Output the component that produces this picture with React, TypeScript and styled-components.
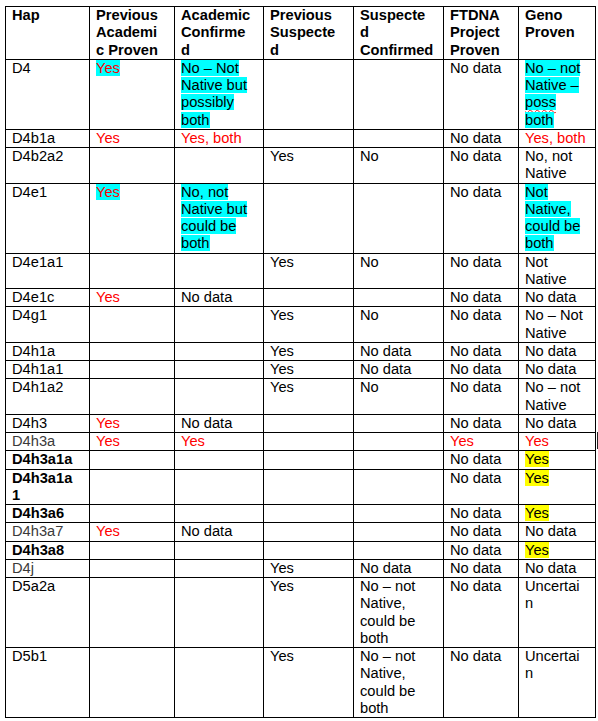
import React from "react";
import styled, { createGlobalStyle } from "styled-components";

type Mark = "cyan" | "yellow";

type CellData =
  | string
  | {
      t: React.ReactNode;
      red?: boolean;
      hl?: Mark;
      bold?: boolean;
      dim?: boolean;
    };

const GlobalStyle = createGlobalStyle`
  html, body {
    margin: 0;
    padding: 0;
    background: #ffffff;
  }
  body {
    font-family: "Liberation Sans", Arial, sans-serif;
    color: #000000;
  }
`;

const Page = styled.div`
  position: relative;
  padding: 6px 0 0 5px;
`;

const Table = styled.table`
  width: 591px;
  table-layout: fixed;
  border-collapse: collapse;
  font-size: 11pt;
  line-height: 17.25px;
`;

const Th = styled.th`
  border: 1px solid #000;
  padding: 0 6px;
  text-align: left;
  vertical-align: top;
  font-weight: bold;
  white-space: nowrap;
`;

const Td = styled.td<{ $red?: boolean; $bold?: boolean; $dim?: boolean }>`
  border: 1px solid #000;
  padding: 0 6px;
  vertical-align: top;
  white-space: nowrap;
  font-weight: ${(p) => (p.$bold ? "bold" : "normal")};
  color: ${(p) => (p.$red ? "#ff0000" : p.$dim ? "#3a3a3a" : "#000000")};
`;

const Highlight = styled.span<{ $mark: Mark }>`
  background: ${(p) => (p.$mark === "cyan" ? "#00ffff" : "#ffff00")};
`;

const Spell = styled.span`
  text-decoration: underline wavy #e02020;
  text-decoration-thickness: 1px;
  text-underline-offset: 2px;
  text-decoration-skip-ink: none;
`;

const Caret = styled.div`
  position: absolute;
  left: 597px;
  top: 432px;
  width: 1px;
  height: 17px;
  background: #222;
`;

const headers = [
  "Hap",
  "Previous\nAcademi\nc Proven",
  "Academic\nConfirme\nd",
  "Previous\nSuspecte\nd",
  "Suspecte\nd\nConfirmed",
  "FTDNA\nProject\nProven",
  "Geno\nProven",
];

const colWidths = [84, 85, 89, 90, 90, 75, 77];

const yesRed = { t: "Yes", red: true };

const rows: CellData[][] = [
  [
    "D4",
    { t: "Yes", red: true, hl: "cyan" },
    { t: "No – Not\nNative but\npossibly\nboth", hl: "cyan" },
    "",
    "",
    "No data",
    {
      t: (
        <>
          No – not
          <br />
          Native –
          <br />
          <Spell>poss</Spell>
          <br />
          both
        </>
      ),
      hl: "cyan",
    },
  ],
  ["D4b1a", yesRed, { t: "Yes, both", red: true }, "", "", "No data", { t: "Yes, both", red: true }],
  ["D4b2a2", "", "", "Yes", "No", "No data", "No, not\nNative"],
  [
    "D4e1",
    { t: "Yes", red: true, hl: "cyan" },
    { t: "No, not\nNative but\ncould be\nboth", hl: "cyan" },
    "",
    "",
    "No data",
    { t: "Not\nNative,\ncould be\nboth", hl: "cyan" },
  ],
  ["D4e1a1", "", "", "Yes", "No", "No data", "Not\nNative"],
  ["D4e1c", yesRed, "No data", "", "", "No data", "No data"],
  ["D4g1", "", "", "Yes", "No", "No data", "No – Not\nNative"],
  ["D4h1a", "", "", "Yes", "No data", "No data", "No data"],
  ["D4h1a1", "", "", "Yes", "No data", "No data", "No data"],
  ["D4h1a2", "", "", "Yes", "No", "No data", "No – not\nNative"],
  ["D4h3", yesRed, "No data", "", "", "No data", "No data"],
  [{ t: "D4h3a", dim: true }, yesRed, yesRed, "", "", yesRed, yesRed],
  [{ t: "D4h3a1a", bold: true }, "", "", "", "", "No data", { t: "Yes", hl: "yellow" }],
  [{ t: "D4h3a1a\n1", bold: true }, "", "", "", "", "No data", { t: "Yes", hl: "yellow" }],
  [{ t: "D4h3a6", bold: true }, "", "", "", "", "No data", { t: "Yes", hl: "yellow" }],
  [{ t: "D4h3a7", dim: true }, yesRed, "No data", "", "", "No data", "No data"],
  [{ t: "D4h3a8", bold: true }, "", "", "", "", "No data", { t: "Yes", hl: "yellow" }],
  [{ t: "D4j", dim: true }, "", "", "Yes", "No data", "No data", "No data"],
  ["D5a2a", "", "", "Yes", "No – not\nNative,\ncould be\nboth", "No data", "Uncertai\nn"],
  ["D5b1", "", "", "Yes", "No – not\nNative,\ncould be\nboth", "No data", "Uncertai\nn"],
];

function lines(text: React.ReactNode) {
  if (typeof text !== "string") return text;
  const parts = text.split("\n");
  return parts.map((p, i) => (
    <React.Fragment key={i}>
      {p}
      {i < parts.length - 1 && <br />}
    </React.Fragment>
  ));
}

function Cell({ data }: { data: CellData }) {
  if (typeof data === "string") {
    return <Td>{lines(data)}</Td>;
  }
  const body = data.hl ? <Highlight $mark={data.hl}>{lines(data.t)}</Highlight> : lines(data.t);
  return (
    <Td $red={data.red} $bold={data.bold} $dim={data.dim}>
      {body}
    </Td>
  );
}

export default function App(): JSX.Element {
  return (
    <>
      <GlobalStyle />
      <Page>
        <Table>
          <colgroup>
            {colWidths.map((w, i) => (
              <col key={i} style={{ width: w }} />
            ))}
          </colgroup>
          <thead>
            <tr>
              {headers.map((h) => (
                <Th key={h}>{lines(h)}</Th>
              ))}
            </tr>
          </thead>
          <tbody>
            {rows.map((row, r) => (
              <tr key={r}>
                {row.map((c, i) => (
                  <Cell key={i} data={c} />
                ))}
              </tr>
            ))}
          </tbody>
        </Table>
        <Caret />
      </Page>
    </>
  );
}
